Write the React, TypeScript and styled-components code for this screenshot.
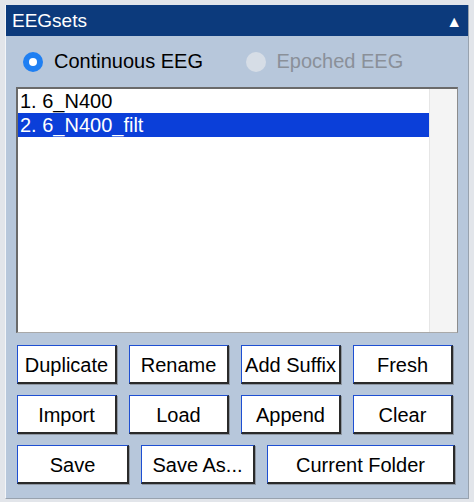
import React, { useState } from "react";
import styled, { createGlobalStyle } from "styled-components";

const GlobalStyle = createGlobalStyle`
  html, body {
    margin: 0;
    padding: 0;
    background: #e2e5ea;
    font-family: "Liberation Sans", Arial, sans-serif;
  }
`;

const Page = styled.div`
  padding: 5px 0 0 5px;
`;

const Panel = styled.div`
  width: 462px;
  height: 493px;
  background: #b7c7db;
  border-left: 1px solid #f3f5f8;
  border-right: 1px solid #98a2ae;
  border-bottom: 1px solid #98a2ae;
  display: flex;
  flex-direction: column;
`;

const Header = styled.div`
  height: 31px;
  background: #0c3a7c;
  color: #ffffff;
  font-size: 19px;
  display: flex;
  align-items: center;
  justify-content: space-between;
  padding: 0 6px 0 6px;
`;

const Toggle = styled.span`
  font-size: 16px;
  line-height: 1;
  padding-top: 2px;
`;

const RadioRow = styled.div`
  height: 51px;
  display: flex;
  align-items: center;
  padding-left: 17px;
`;

const RadioOption = styled.label<{ $disabled?: boolean }>`
  display: flex;
  align-items: center;
  gap: 11px;
  width: 224px;
  font-size: 20px;
  color: ${(p) => (p.$disabled ? "#8a9099" : "#000000")};
`;

const RadioDot = styled.span<{ $checked?: boolean; $disabled?: boolean }>`
  width: 20px;
  height: 20px;
  border-radius: 50%;
  box-sizing: border-box;
  background: ${(p) => (p.$disabled ? "#d6dde6" : "#1f7ff2")};
  display: flex;
  align-items: center;
  justify-content: center;
  &::after {
    content: "";
    width: 8px;
    height: 8px;
    border-radius: 50%;
    background: #ffffff;
    display: ${(p) => (p.$checked ? "block" : "none")};
  }
`;

const ListBox = styled.div`
  margin-left: 10px;
  width: 442px;
  height: 246px;
  box-sizing: border-box;
  background: #ffffff;
  border-top: 2px solid #6a6a6a;
  border-left: 2px solid #6a6a6a;
  border-right: 1px solid #8c8c8c;
  border-bottom: 1px solid #a9a9a9;
  display: flex;
`;

const Items = styled.ul`
  flex: 1;
  margin: 0;
  padding: 0;
  list-style: none;
`;

const Item = styled.li<{ $selected?: boolean }>`
  height: 24px;
  line-height: 24px;
  padding-left: 2px;
  font-size: 20px;
  background: ${(p) => (p.$selected ? "#0b3fd9" : "transparent")};
  color: ${(p) => (p.$selected ? "#ffffff" : "#000000")};
  cursor: default;
`;

const ScrollTrack = styled.div`
  width: 27px;
  background: #f4f4f4;
  border-left: 1px solid #e6e6e6;
`;

const Buttons = styled.div`
  display: flex;
  flex-direction: column;
  gap: 11px;
  padding: 12px 14px 0 11px;
`;

const ButtonRow = styled.div<{ $cols: string }>`
  display: grid;
  grid-template-columns: ${(p) => p.$cols};
  column-gap: 12px;
  height: 39px;
`;

const Button = styled.button`
  box-sizing: border-box;
  margin: 0;
  padding: 2px 0 0;
  background: #ffffff;
  font-family: "Liberation Sans", Arial, sans-serif;
  font-size: 20px;
  color: #000000;
  white-space: nowrap;
  border-top: 1px solid #1e4fd2;
  border-left: 1px solid #1e4fd2;
  border-right: 2px solid #2a2a2a;
  border-bottom: 2px solid #2a2a2a;
  box-shadow: 1px 1px 0 #8e97a3;
  cursor: pointer;
`;

const items = ["1. 6_N400", "2. 6_N400_filt"];

const App: React.FC = () => {
  const [selected, setSelected] = useState(1);

  return (
    <Page>
      <GlobalStyle />
      <Panel>
        <Header>
          <span>EEGsets</span>
          <Toggle>▲</Toggle>
        </Header>
        <RadioRow>
          <RadioOption>
            <RadioDot $checked />
            Continuous EEG
          </RadioOption>
          <RadioOption $disabled>
            <RadioDot $disabled />
            Epoched EEG
          </RadioOption>
        </RadioRow>
        <ListBox>
          <Items>
            {items.map((name, i) => (
              <Item
                key={name}
                $selected={i === selected}
                onClick={() => setSelected(i)}
              >
                {name}
              </Item>
            ))}
          </Items>
          <ScrollTrack />
        </ListBox>
        <Buttons>
          <ButtonRow $cols="100px 100px 100px 100px">
            <Button>Duplicate</Button>
            <Button>Rename</Button>
            <Button>Add Suffix</Button>
            <Button>Fresh</Button>
          </ButtonRow>
          <ButtonRow $cols="100px 100px 100px 100px">
            <Button>Import</Button>
            <Button>Load</Button>
            <Button>Append</Button>
            <Button>Clear</Button>
          </ButtonRow>
          <ButtonRow $cols="112px 114px 188px">
            <Button>Save</Button>
            <Button>Save As...</Button>
            <Button>Current Folder</Button>
          </ButtonRow>
        </Buttons>
      </Panel>
    </Page>
  );
};

export default App;
